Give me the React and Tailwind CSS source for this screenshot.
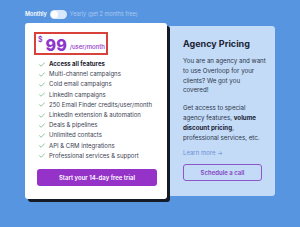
import React from "react";

const features = [
  "Multi-channel campaigns",
  "Cold email campaigns",
  "LinkedIn campaigns",
  "250 Email Finder credits/user/month",
  "LinkedIn extension & automation",
  "Deals & pipelines",
  "Unlimited contacts",
  "API & CRM integrations",
  "Professional services & support",
];

const Check = () => (
  <svg width="6" height="5" viewBox="0 0 12 10" className="shrink-0">
    <path d="M1 5.5 L4.3 8.5 L11 1.5" fill="none" stroke="#7dc48f" strokeWidth="1.8" strokeLinecap="round" strokeLinejoin="round" />
  </svg>
);

const App = () => {
  return (
    <div
      className="w-[300px] h-[227px] bg-[#5795e0] overflow-hidden"
      style={{ fontFamily: "Inter, 'Open Sans', sans-serif" }}
    >
      {/* billing toggle */}
      <div className="flex items-center gap-[3px] pl-[25px] pt-[9px] h-[20px]">
        <span className="text-[5.5px] font-semibold text-white">Monthly</span>
        <div className="w-[17px] h-[9px] rounded-full bg-[#d8e7fb] flex items-center px-[1px]">
          <div className="w-[7px] h-[7px] rounded-full bg-white" />
        </div>
        <span className="text-[5.5px] text-[#a9c9f1]">Yearly (get 2 months free)</span>
      </div>

      <div className="flex items-start pl-[25px] pt-[3px]">
        {/* main plan card */}
        <div className="relative z-10 w-[142px] h-[176px] bg-white rounded-[3px] shadow-[3px_3px_0_#151b26] px-[9px] pt-[9px]">
          <div className="w-[74px] h-[23px] border-2 border-[#d8423a] flex items-start pl-[2px] pt-[2px] text-[#8f35c9]">
            <span className="text-[7px] font-semibold leading-none">$</span>
            <span className="text-[16px] font-extrabold leading-none ml-[3px] mt-[1px]">99</span>
            <span className="text-[6px] font-medium ml-[3px] mt-[8px] leading-none whitespace-nowrap">/user/month</span>
          </div>

          <ul className="mt-[4px] pl-[5px] text-[6px] leading-[10.2px] text-[#3a4252] whitespace-nowrap">
            <li className="flex items-center gap-[4px] font-bold text-[#1b2130]">
              <Check />
              Access all features
            </li>
            {features.map((f) => (
              <li key={f} className="flex items-center gap-[4px]">
                <Check />
                {f}
              </li>
            ))}
          </ul>

          <button className="mt-[8px] ml-[3px] w-[120px] h-[17px] rounded-[3px] bg-[#9533c8] text-white text-[6px] font-semibold">
            Start your 14-day free trial
          </button>
        </div>

        {/* agency card */}
        <div className="w-[108px] h-[170px] mt-[3px] bg-[#c3dbf7] rounded-[3px] pl-[16px] pr-[6px] pt-[13px] text-[#2b3447] whitespace-nowrap">
          <h2 className="text-[9px] font-bold text-[#1c2335] leading-none">Agency Pricing</h2>
          <p className="mt-[8px] text-[6.2px] leading-[9.8px]">
            You are an agency and want
            <br />
            to use Overloop for your
            <br />
            clients? We got you
            <br />
            covered!
          </p>
          <p className="mt-[8px] text-[6.2px] leading-[9.8px]">
            Get access to special
            <br />
            agency features, <b className="font-bold text-[#1c2335]">volume</b>
            <br />
            <b className="font-bold text-[#1c2335]">discount pricing</b>,
            <br />
            professional services, etc.
          </p>
          <div className="mt-[6px] text-[6px] text-[#6f8fd6]">Learn more →</div>
          <button className="mt-[6px] w-[79px] h-[17px] rounded-[3px] border border-[#8d57c9] text-[#8542bf] text-[6px] font-semibold">
            Schedule a call
          </button>
        </div>
      </div>
    </div>
  );
};

export default App;
